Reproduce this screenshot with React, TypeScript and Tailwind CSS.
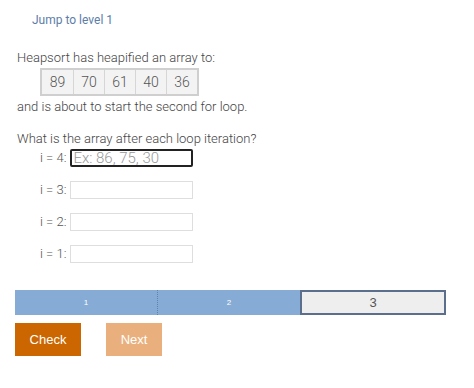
export default function App() {
	const cells = [89, 70, 61, 40, 36];
	const rows = [
		{ i: 4, focused: true },
		{ i: 3, focused: false },
		{ i: 2, focused: false },
		{ i: 1, focused: false },
	];

	return (
		<div className="h-[388px] w-[474px] bg-white font-['Roboto',sans-serif] text-[#444]">
			<div className="pl-[32px] pt-[11px] text-[12px] leading-[18px] text-[#5c7ea8]">Jump to level 1</div>

			<div className="mt-[21px] pl-[17px] text-[13px] font-light leading-[16px]">Heapsort has heapified an array to:</div>
			<div className="ml-[40px] mt-[2px] flex w-fit border-2 border-[#cfcfcf] bg-[#f3f3f3]">
				{cells.map((c, idx) => (
					<div
						key={c}
						className={
							"flex h-[24px] w-[31px] items-center justify-center text-[14px] font-light text-[#555] " +
							(idx > 0 ? "border-l border-[#d6d6d6]" : "")
						}
					>
						{c}
					</div>
				))}
			</div>
			<div className="mt-[3px] pl-[17px] text-[13px] font-light leading-[16px]">and is about to start the second for loop.</div>

			<div className="mt-[16px] pl-[17px] text-[13px] font-light leading-[16px]">What is the array after each loop iteration?</div>
			<div className="mt-[2px] flex flex-col gap-[14px] pl-[40px]">
				{rows.map((r) => (
					<div key={r.i} className="flex h-[18px] items-center gap-[4px]">
						<span className="whitespace-nowrap text-[13px] font-light text-[#555]">i = {r.i}:</span>
						<div
							className={
								"flex h-[18px] w-[123px] items-center overflow-hidden px-[1px] text-[15px] font-light leading-[16px] text-[#999] " +
								(r.focused ? "rounded-[2px] border-2 border-[#222]" : "border border-[#dedede]")
							}
						>
							{r.focused ? "Ex: 86, 75, 30" : ""}
						</div>
					</div>
				))}
			</div>

			<div className="ml-[15px] mt-[27px] flex h-[25px] w-[431px] font-['Liberation_Sans',sans-serif]">
				<div className="flex flex-1 items-center justify-center bg-[#86acd5] text-[8px] text-white">1</div>
				<div className="flex flex-1 items-center justify-center border-l border-dotted border-[#5d82ad] bg-[#86acd5] text-[8px] text-white">
					2
				</div>
				<div className="flex flex-1 items-center justify-center border-2 border-[#5b6e8c] bg-[#eeeeee] text-[13px] text-[#555]">3</div>
			</div>

			<div className="ml-[15px] mt-[8px] flex gap-[25px] font-['Liberation_Sans',sans-serif] text-[13px] text-white">
				<button className="h-[33px] w-[66px] bg-[#cc6600]">Check</button>
				<button className="h-[33px] w-[56px] bg-[#e9b07d]">Next</button>
			</div>
		</div>
	);
}
